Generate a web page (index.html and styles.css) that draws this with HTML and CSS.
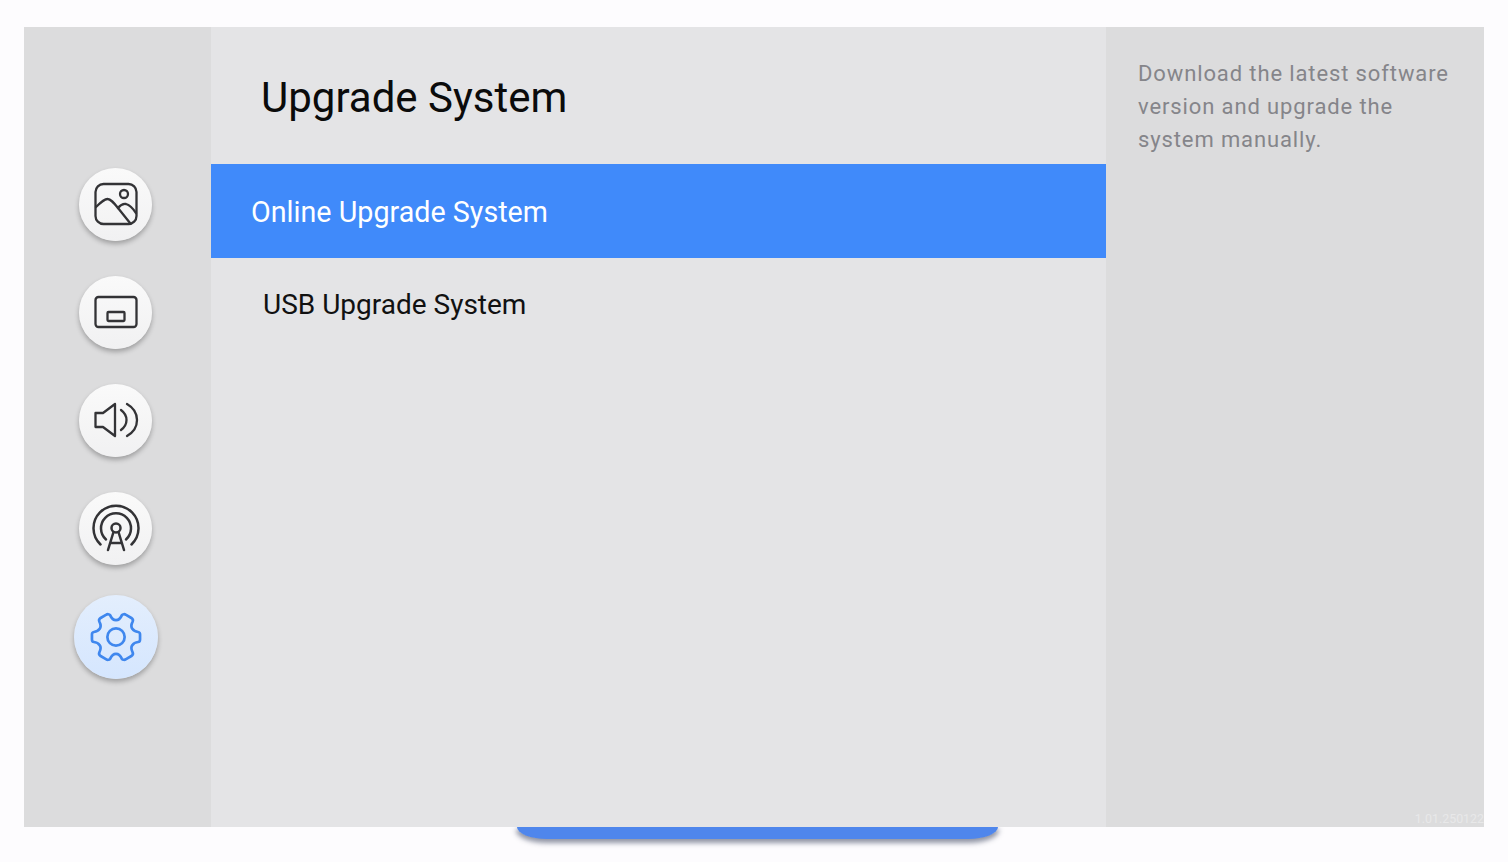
FILE: index.html
```html
<!DOCTYPE html>
<html lang="en">
<head>
<meta charset="utf-8">
<title>Upgrade System</title>
<link rel="stylesheet" href="styles.css">
</head>
<body>
<div class="panel">
  <nav class="sidebar">
    <div class="nav-slot"><div class="nav-btn">
      <svg class="icon" viewBox="0 0 44 44"><rect x="1.500" y="2" width="41" height="40" rx="8"/><circle cx="30" cy="12" r="4"/><path d="M2 25 C6 21 10 17 13.500 17 C17 17 20 21 24 26 L36 41"/><path d="M24 26 C26 23.500 29 21.500 32 22 C36 23 40 28 42 31"/></svg>
    </div></div>
    <div class="nav-slot"><div class="nav-btn">
      <svg class="icon" viewBox="0 0 44 44"><rect x="1.500" y="7" width="41" height="30" rx="3"/><rect x="13.500" y="22" width="17" height="9" rx="1"/></svg>
    </div></div>
    <div class="nav-slot"><div class="nav-btn">
      <svg class="icon" viewBox="0 0 44 44"><path d="M1.500 15 V29 H9 L21 38 V6 L9 15 Z"/><path d="M27 12 C31 15 32.500 18.500 32.500 22 C32.500 25.500 31 29 27 32"/><path d="M33 6 C40 10 43 16 43 22 C43 28 40 34 33 38"/></svg>
    </div></div>
    <div class="nav-slot"><div class="nav-btn">
      <svg class="icon icon-antenna" viewBox="0 0 44 44"><circle cx="22" cy="22" r="4.500"/><path d="M19.500 26 L14 44 M24.500 26 L30 44 M17 37 H27"/><path d="M12 33.500 A15 15 0 1 1 32 33.500"/><path d="M6.500 38.500 A22.500 22.500 0 1 1 37.500 38.500"/></svg>
    </div></div>
    <div class="nav-slot"><div class="nav-btn nav-btn-active">
      <svg class="icon icon-active" viewBox="0 0 52 52"><circle cx="26" cy="26" r="9"/><path d="M20 3.500 C21.500 7 23.500 8.500 26 8.500 C28.500 8.500 30.500 7 32 3.500 C33 2 35 2 36.500 3 L42 6.200 C43.500 7.200 44 8.500 43.300 10 C41.500 13.500 41.500 15.500 43 17.500 C44.300 19.500 46.500 20.500 49 20.800 C50.500 21 51 22 51 23.500 V28.500 C51 30 50.500 31 49 31.200 C46.500 31.500 44.300 32.500 43 34.500 C41.500 36.500 41.500 38.500 43.300 42 C44 43.500 43.500 44.800 42 45.800 L36.500 49 C35 50 33 50 32 48.500 C30.500 45 28.500 43.500 26 43.500 C23.500 43.500 21.500 45 20 48.500 C19 50 17 50 15.500 49 L10 45.800 C8.500 44.800 8 43.500 8.700 42 C10.500 38.500 10.500 36.500 9 34.500 C7.700 32.500 5.500 31.500 3 31.200 C1.500 31 1 30 1 28.500 V23.500 C1 22 1.500 21 3 20.800 C5.500 20.500 7.700 19.500 9 17.500 C10.500 15.500 10.500 13.500 8.700 10 C8 8.500 8.500 7.200 10 6.200 L15.500 3 C17 2 19 2 20 3.500 Z"/></svg>
    </div></div>
  </nav>
  <main class="content">
    <h1 class="title">Upgrade System</h1>
    <div class="row row-selected">Online Upgrade System</div>
    <div class="row">USB Upgrade System</div>
  </main>
  <aside class="help">
    <p class="help-text">Download the latest software version and upgrade the system manually.</p>
    <span class="version">1.01.250122</span>
  </aside>
</div>
<div class="peek"></div>
</body>
</html>
```
FILE: styles.css
```css
* { box-sizing: border-box; }
html, body { margin: 0; height: 100%; }
body {
  background: #fdfcfe;
  font-family: Roboto, "Liberation Sans", sans-serif;
  padding: 27px 24px 0;
  overflow: hidden;
}
.panel {
  display: flex;
  height: 800px;
  position: relative;
  z-index: 1;
}
.sidebar {
  width: 187px;
  background: #dcdcdd;
  padding: 123px 4px 0 0;
  display: flex;
  flex-direction: column;
}
.nav-slot {
  height: 108px;
  display: flex;
  align-items: center;
  justify-content: center;
}
.nav-btn {
  width: 73px;
  height: 73px;
  border-radius: 50%;
  background: linear-gradient(#fafafa, #f1f1f2);
  box-shadow: 0 3px 5px rgba(0, 0, 0, 0.28);
  display: flex;
  align-items: center;
  justify-content: center;
}
.nav-btn-active {
  width: 84px;
  height: 84px;
  margin-top: 2px;
  background: linear-gradient(#e3eefd, #d5e6fe);
}
.icon {
  width: 44px;
  height: 44px;
  fill: none;
  stroke: #333336;
  stroke-width: 2.300;
  stroke-linecap: round;
  stroke-linejoin: round;
  overflow: visible;
}
.icon-antenna {
  stroke-width: 2.500;
}
.icon-active {
  width: 50px;
  height: 50px;
  stroke: #3f87ee;
  stroke-width: 2.800;
}
.content {
  width: 895px;
  background: #e4e4e6;
  display: flex;
  flex-direction: column;
}
.title {
  margin: 0;
  height: 137px;
  padding: 45px 0 0 50px;
  font-size: 42px;
  line-height: 52px;
  font-weight: 400;
  color: #0b0b0b;
}
.row {
  height: 94px;
  padding: 0 0 0 52px;
  font-size: 28px;
  line-height: 94px;
  color: #111;
}
.row-selected {
  padding-left: 40px;
  font-size: 28.700px;
  line-height: 96px;
  background: #408afa;
  color: #fff;
}
.help {
  width: 378px;
  background: #dcdcdd;
  padding: 30px 30px 0 32px;
  position: relative;
}
.help-text {
  margin: 0;
  font-size: 22px;
  line-height: 33px;
  letter-spacing: 0.880px;
  color: #85858a;
}
.version {
  position: absolute;
  right: 0;
  bottom: 1px;
  font-size: 12.400px;
  line-height: 14px;
  color: #e8e8e9;
}
.peek {
  width: 481px;
  height: 12px;
  margin: 0 0 0 493px;
  background: #4f86ec;
  border-radius: 0 0 30px 30px / 0 0 12px 12px;
  box-shadow: 0 3px 5px 1px rgba(40, 50, 80, 0.5);
}
```
